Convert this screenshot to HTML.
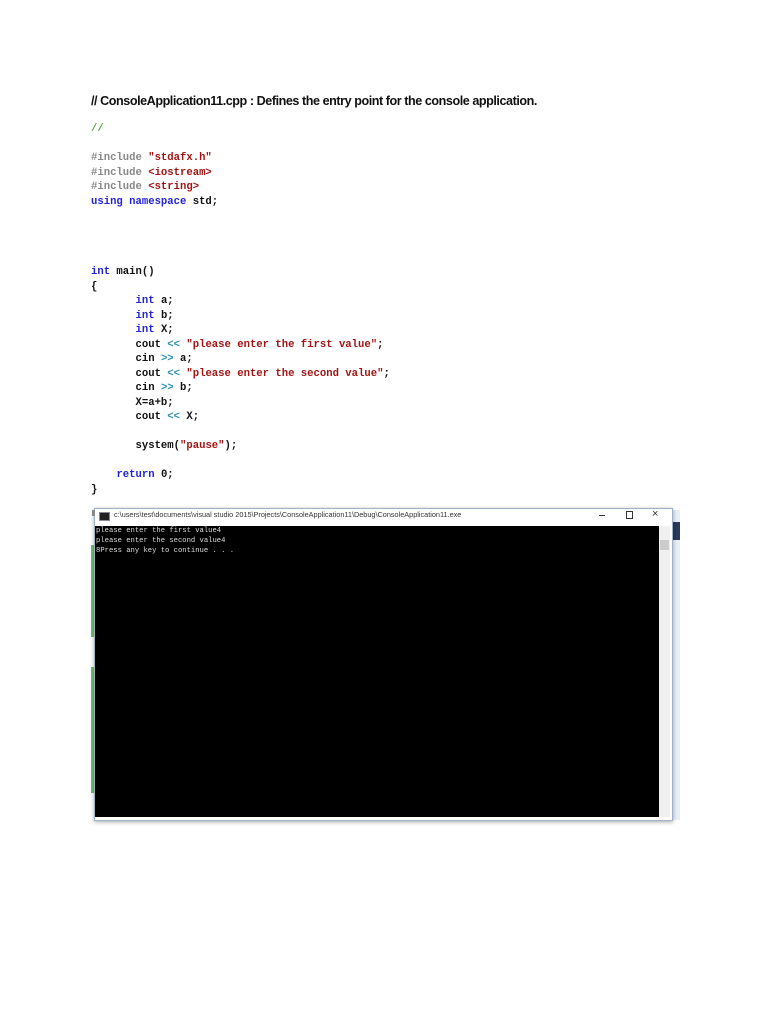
<!DOCTYPE html>
<html><head><meta charset="utf-8"><style>
body{margin:0;width:768px;height:1024px;background:#fff;position:relative;overflow:hidden}
.h{position:absolute;left:91px;top:94px;font:bold 12.6px "Liberation Sans",sans-serif;color:#111;letter-spacing:-0.45px;white-space:nowrap}
pre{position:absolute;margin:0;font:bold 10.6px/14.5px "Liberation Mono",monospace;color:#111;white-space:pre}
.k{color:#2323d8}.s{color:#a31515}.o{color:#2b91af}.g{color:#888}.c{color:#57a64a}
.win{position:absolute;left:94px;top:508px;width:577px;height:311px;background:#fff;box-shadow:0 1px 4px rgba(0,0,0,.35);border:1px solid #9fb3c8}
.con{position:absolute;left:95px;top:526px;width:564px;height:291px;background:#000}
.sb{position:absolute;left:659px;top:526px;width:11px;height:291px;background:#f0f0f0}
.ct{position:absolute;left:96px;top:526px;font:7.2px/10px "Liberation Mono",monospace;color:#ddd;white-space:pre}
.title{position:absolute;left:114px;top:510px;font:7.3px "Liberation Sans",sans-serif;color:#333;white-space:nowrap}
</style></head><body>
<div class="h">// ConsoleApplication11.cpp : Defines the entry point for the console application.</div>
<pre style="left:91px;top:122px"><span class="c">//</span></pre>
<pre style="left:91px;top:151px"><span class="g">#include</span> <span class="s">"stdafx.h"</span>
<span class="g">#include</span> <span class="s">&lt;iostream&gt;</span>
<span class="g">#include</span> <span class="s">&lt;string&gt;</span>
<span class="k">using namespace</span> std;</pre>
<pre style="left:91px;top:265px"><span class="k">int</span> main()
{
       <span class="k">int</span> a;
       <span class="k">int</span> b;
       <span class="k">int</span> X;
       cout <span class="o">&lt;&lt;</span> <span class="s">"please enter the first value"</span>;
       cin <span class="o">&gt;&gt;</span> a;
       cout <span class="o">&lt;&lt;</span> <span class="s">"please enter the second value"</span>;
       cin <span class="o">&gt;&gt;</span> b;
       X=a+b;
       cout <span class="o">&lt;&lt;</span> X;

       system(<span class="s">"pause"</span>);

    <span class="k">return</span> 0;
}</pre>
<div style="position:absolute;left:672px;top:510px;width:8px;height:310px;background:#e8eef5"></div>
<div style="position:absolute;left:672px;top:522px;width:8px;height:18px;background:#2a3a5a"></div>
<div style="position:absolute;left:91px;top:545px;width:3px;height:92px;background:#6cc26c"></div>
<div style="position:absolute;left:91px;top:667px;width:3px;height:126px;background:#6cc26c"></div>
<div class="win"></div>
<div style="position:absolute;left:92px;top:510px;width:3px;height:6px;background:#888"></div>
<div style="position:absolute;left:99px;top:512px;width:9px;height:7px;background:#222;border:1px solid #889"></div>
<div class="title">c:\users\test\documents\visual studio 2015\Projects\ConsoleApplication11\Debug\ConsoleApplication11.exe</div>
<div style="position:absolute;left:599px;top:515px;width:6px;height:1px;background:#333"></div>
<div style="position:absolute;left:626px;top:511px;width:5px;height:6px;border:1px solid #333"></div>
<div style="position:absolute;left:652px;top:508px;font:11px 'Liberation Sans',sans-serif;color:#333">×</div>
<div class="con"></div>
<div class="sb"></div>
<div style="position:absolute;left:660px;top:540px;width:9px;height:10px;background:#ccc"></div>
<div class="ct">please enter the first value4
please enter the second value4
8Press any key to continue . . .</div>
</body></html>
